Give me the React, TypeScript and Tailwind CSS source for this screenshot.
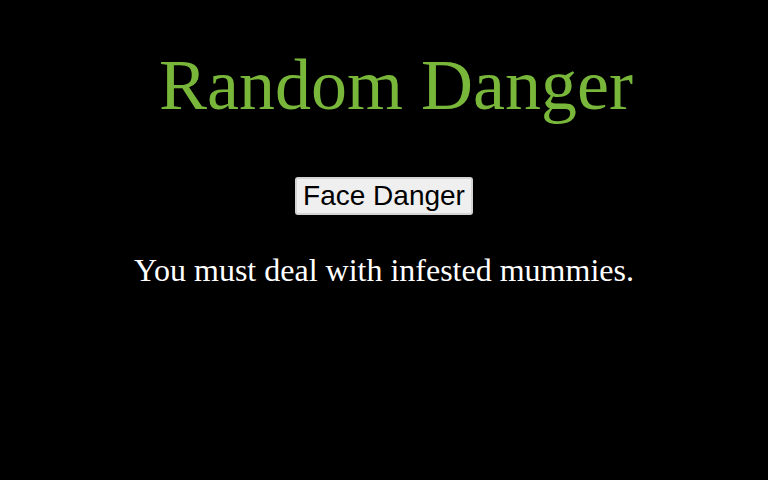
import { useState } from 'react';

const DANGERS = [
  'You must deal with infested mummies.',
  'A pack of wolves is circling the camp.',
  'The bridge ahead is about to collapse.',
  'Poisonous gas fills the corridor.',
];

export default function App() {
  const [danger, setDanger] = useState(DANGERS[0]);

  const faceDanger = () => {
    setDanger(DANGERS[Math.floor(Math.random() * DANGERS.length)]);
  };

  return (
    <div className="min-h-screen bg-black flex flex-col items-center font-['Liberation_Serif',serif]">
      <h1 className="mt-11 pl-6 text-[72px] leading-[normal] text-[#79b73b]">Random Danger</h1>

      <button
        type="button"
        onClick={faceDanger}
        className="mt-[50px] bg-[#efefef] text-black border-2 border-[#d4d4d4] rounded-[3px] px-[6px] py-px text-[28px] leading-[normal] font-['Liberation_Sans',Arial,sans-serif]"
      >
        Face Danger
      </button>

      <p className="mt-[37px] text-[32px] leading-[normal] text-white">{danger}</p>
    </div>
  );
}
